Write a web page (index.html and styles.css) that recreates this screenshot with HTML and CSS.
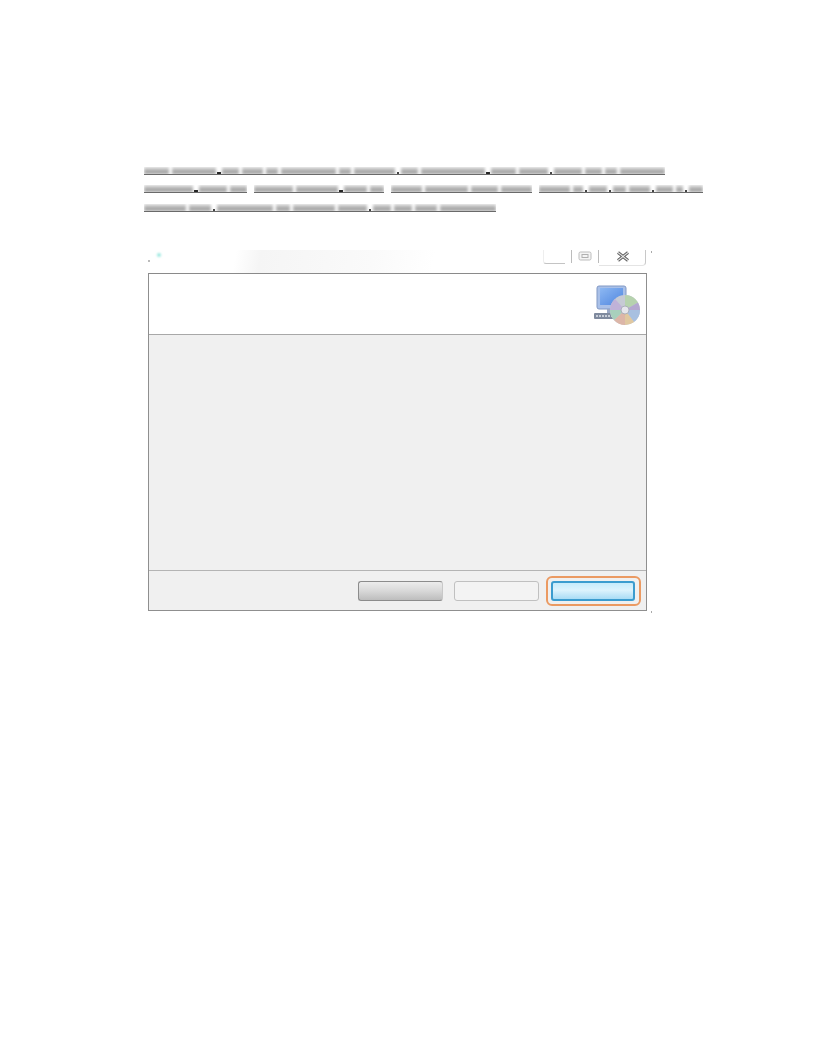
FILE: index.html
```html
<!DOCTYPE html>
<html lang="en">
<head>
<meta charset="utf-8">
<title>Setup dialog</title>
<link rel="stylesheet" href="styles.css">
</head>
<body>
<main class="page">
  <section class="para" aria-hidden="true">
    <div class="line l1">
      <div class="seg grow">
        <i class="w w20"></i><i class="w w40"></i><i class="k k5"></i><i class="w w12"></i><i class="w w16"></i><i class="w w8"></i><i class="w w50"></i><i class="w w8"></i><i class="w w36"></i><i class="k"></i><i class="w w12"></i><i class="w w60"></i><i class="k k5"></i><i class="w w20"></i><i class="w w24"></i><i class="k"></i><i class="w w24"></i><i class="w w12"></i><i class="w w8"></i><i class="w w40"></i>
      </div>
    </div>
    <div class="line l2">
      <div class="seg s1"><i class="w w40"></i><i class="k k5"></i><i class="w w20"></i><i class="w w8"></i></div>
      <div class="seg s2"><i class="w w36"></i><i class="w w40"></i><i class="k k5"></i><i class="w w20"></i><i class="w w12"></i></div>
      <div class="seg s3"><i class="w w24"></i><i class="w w36"></i><i class="w w20"></i><i class="w w24"></i></div>
      <div class="seg grow"><i class="w w36"></i><i class="w w12"></i><i class="k"></i><i class="w w20"></i><i class="k"></i><i class="w w16"></i><i class="w w24"></i><i class="k"></i><i class="w w20"></i><i class="w w8"></i><i class="k"></i><i class="w w16"></i></div>
    </div>
    <div class="line l3">
      <div class="seg grow">
        <i class="w w36"></i><i class="w w16"></i><i class="k"></i><i class="w w50"></i><i class="w w8"></i><i class="w w36"></i><i class="w w24"></i><i class="k"></i><i class="w w12"></i><i class="w w12"></i><i class="w w16"></i><i class="w w50"></i>
      </div>
    </div>
  </section>

  <section class="window">
    <span class="corner corner-top"></span>
    <span class="corner corner-bottom"></span>
    <div class="titlebar">
      <div class="app"><span class="app-dot"></span><span class="app-glow"></span></div>
      <div class="controls">
        <span class="ctl-min"></span>
        <span class="sep"></span>
        <span class="ctl-max"><svg width="14" height="10" viewBox="0 0 14 10"><rect x="1" y="1" width="12" height="8" rx="1.5" fill="#f4f4f4" stroke="#bdbdbd"/><rect x="4" y="3.500" width="6" height="3" fill="none" stroke="#b0b0b0"/></svg></span>
        <span class="sep"></span>
        <span class="ctl-close"><svg width="14" height="11" viewBox="0 0 14 11"><path d="M2 1.500l10 8M12 1.500l-10 8" stroke="#5a5a5a" stroke-width="3" fill="none"/><path d="M2 1.500l10 8M12 1.500l-10 8" stroke="#e4e4e4" stroke-width="1.100" fill="none"/></svg></span>
      </div>
    </div>
    <div class="frame">
      <header class="head">
        <svg class="setup-icon" width="48" height="42" viewBox="0 0 48 42">
          <defs>
            <linearGradient id="scr" x1="0" y1="0" x2="1" y2="1"><stop offset="0" stop-color="#8db8f2"/><stop offset="1" stop-color="#4f86e0"/></linearGradient>
          </defs>
          <rect x="3" y="1" width="29" height="23" rx="2" fill="#a9c0e8" stroke="#8299c4"/>
          <rect x="6" y="3" width="23" height="17" fill="url(#scr)"/>
          <rect x="13" y="24" width="9" height="4" fill="#9aa8c4"/>
          <rect x="0" y="28" width="25" height="6" rx="1" fill="#7f8a9e"/>
          <path d="M2 31h20" stroke="#dfe4ec" stroke-width="1.400" stroke-dasharray="2 1"/>
          <circle cx="31" cy="25" r="15" fill="#c6cad4"/>
          <path d="M31 25L31 10A15 15 0 0 1 44 17.500Z" fill="#b6d2ae"/>
          <path d="M31 25L44 17.500A15 15 0 0 1 46 25Z" fill="#b4a8d0"/>
          <path d="M31 25L46 25A15 15 0 0 1 40 37Z" fill="#a8c0e0"/>
          <path d="M31 25L40 37A15 15 0 0 1 31 40Z" fill="#e0c8a0"/>
          <path d="M31 25L31 40A15 15 0 0 1 20 35Z" fill="#dcb6a8"/>
          <path d="M31 25L20 35A15 15 0 0 1 16 25Z" fill="#a8d0bc"/>
          <path d="M31 25L16 25A15 15 0 0 1 21 14Z" fill="#c0b2d8"/>
          <circle cx="31" cy="25" r="4" fill="#e6e6ec" stroke="#a0a4b0" stroke-width=".8"/>
        </svg>
      </header>
      <div class="body"></div>
      <footer class="foot">
        <button class="btn btn-grey" type="button" aria-label="Back"></button>
        <button class="btn btn-plain" type="button" aria-label="Next"></button>
        <span class="focus-ring"><button class="btn btn-blue" type="button" aria-label="Cancel"></button></span>
      </footer>
    </div>
  </section>
</main>
</body>
</html>
```

FILE: styles.css
```css
* { box-sizing: border-box; }
html, body { margin: 0; padding: 0; background: #fff; }
body { font-family: "Liberation Sans", Arial, sans-serif; }

.page { padding: 167px 0 0 144px; height: 1056px; overflow: hidden; }

.para { display: flex; flex-direction: column; }
.line { display: flex; height: 8px; gap: 7px; }
.l1 { width: 521px; }
.l2 { width: 559px; margin-top: 10px; }
.l3 { width: 352px; margin-top: 11px; }
.seg {
  display: flex;
  gap: 3px;
  align-items: flex-end;
  overflow: hidden;
  border-bottom: 1px solid #6a6a6a;
}
.grow { flex: 1; }
.s1 { flex: 0 0 103px; }
.s2 { flex: 0 0 130px; }
.s3 { flex: 0 0 141px; }

.w {
  display: block;
  flex: 1 1 auto;
  height: 7px;
  background: linear-gradient(rgba(170, 170, 170, 0.4), #8e8e8e);
  filter: blur(1.8px);
}
.k { display: block; flex: none; width: 2px; height: 2px; background: #444; margin: 0 -1px; }
.k5 { width: 4px; background: #222; margin: 0 -2px; }
.w8 { width: 8px; }
.w12 { width: 12px; }
.w16 { width: 16px; }
.w20 { width: 20px; }
.w24 { width: 24px; }
.w36 { width: 36px; }
.w40 { width: 40px; }
.w50 { width: 50px; }
.w60 { width: 60px; }

.window { position: relative; width: 508px; margin-top: 38px; }
.corner { position: absolute; right: 0; width: 1px; height: 2px; background: #aaa; }
.corner-top { top: 1px; }
.corner-bottom { bottom: -2px; }

.titlebar {
  height: 23px;
  display: flex;
  justify-content: space-between;
  background: linear-gradient(100deg, #fff 18%, #f5f5f5 23%, #fafafa 45%, #fff 57%);
}
.app { position: relative; width: 30px; }
.app-dot { position: absolute; left: 4px; top: 10px; width: 2px; height: 2px; background: #bbb; }
.app-glow { position: absolute; left: 13px; top: 3px; width: 4px; height: 4px; border-radius: 50%; background: #9be8e0; filter: blur(1px); }

.controls { display: flex; align-items: flex-start; padding-right: 6px; }
.ctl-min { width: 22px; height: 14px; margin-right: 6px; border-bottom: 1px solid #c4c4c4; border-left: 1px solid #eee; border-radius: 0 0 0 3px; }
.sep { width: 1px; height: 13px; background: #bcbcbc; }
.ctl-max { width: 26px; height: 13px; display: flex; justify-content: center; padding-top: 1px; }
.ctl-close {
  width: 47px;
  height: 16px;
  display: flex;
  justify-content: center;
  padding: 0 0 0 2px;
  border-right: 1px solid #c8c8c8;
  border-bottom: 1px solid #e4e4e4;
  border-radius: 0 0 4px 0;
}
.ctl-close svg { margin-top: 1px; }

.frame {
  width: 499px;
  margin-left: 4px;
  height: 338px;
  display: flex;
  flex-direction: column;
  border: 1px solid #8f8f8f;
  border-top-color: #8a8a8a;
}
.head {
  height: 61px;
  background: #fff;
  border-bottom: 1px solid #a8a8a8;
  display: flex;
  justify-content: flex-end;
  align-items: flex-start;
  padding: 11px 4px 0 0;
}
.setup-icon { filter: blur(.4px); }
.body { flex: 1; background: #f0f0f0; }
.foot {
  height: 40px;
  background: #f0f0f0;
  border-top: 1px solid #b4b4b4;
  display: flex;
  align-items: center;
  justify-content: flex-end;
  padding: 0 5px 0 0;
  gap: 7px;
}
.btn { display: block; width: 85px; height: 20px; padding: 0; border-radius: 3px; }
.btn-grey {
  margin-right: 4px;
  border: 1px solid #8c8c8c;
  border-right-color: #c8c8c8;
  background: linear-gradient(#ececec, #d8d8d8 50%, #bdbdbd);
}
.btn-plain { border: 1px solid #c0c0c0; background: #f3f3f3; }
.focus-ring {
  display: flex;
  width: 95px;
  height: 30px;
  align-items: center;
  justify-content: center;
  border: 2px solid #eb9a62;
  border-radius: 6px;
}
.btn-blue {
  border: 2px solid #3b9ccf;
  width: 84px;
  margin-right: 2px;
  background: linear-gradient(#c6ebfb, #ddf3fd 45%, #a9dcf5);
}
```
